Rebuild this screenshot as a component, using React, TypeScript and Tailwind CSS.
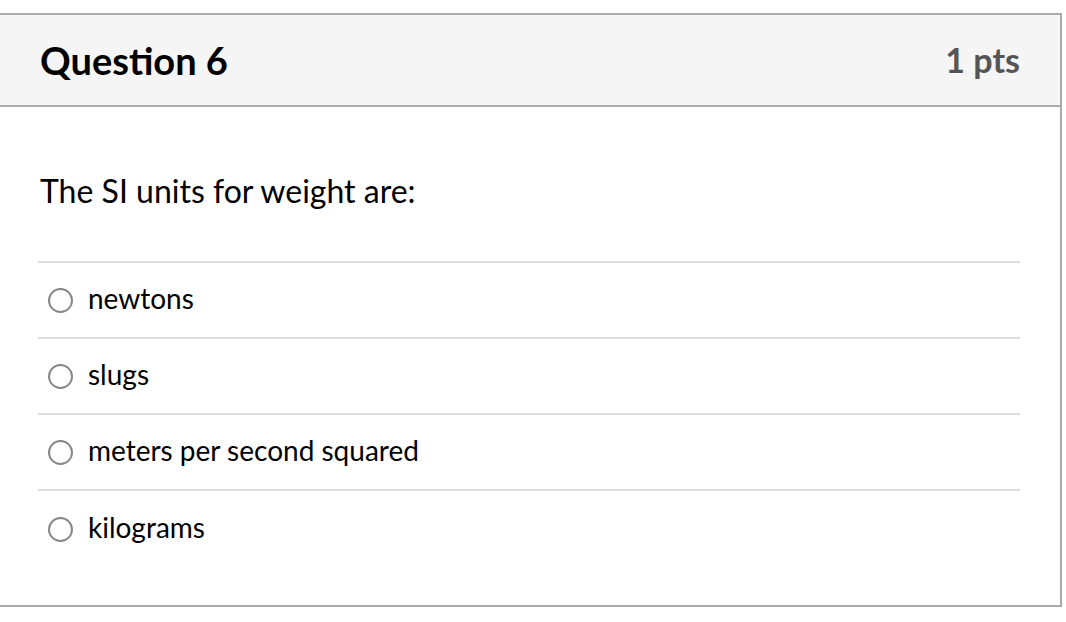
import { useState } from "react";

const answers = ["newtons", "slugs", "meters per second squared", "kilograms"];

export default function App() {
  const [picked, setPicked] = useState<string | null>(null);

  return (
    <div className="min-h-[622px] bg-white pt-[13px] font-['Lato','Liberation_Sans',sans-serif]">
      <div className="-ml-[2px] w-[1064px] border-2 border-[#aaaaaa] bg-white">
        <div className="flex h-[92px] items-center justify-between border-b-2 border-[#aaaaaa] bg-[#f5f5f5] pl-[40px] pr-[40px]">
          <h2 className="text-[38px] leading-[46px] font-bold text-black">Question 6</h2>
          <span className="text-[34px] leading-[46px] font-bold text-[#555555]">1 pts</span>
        </div>
        <div className="pl-[38px] pr-[40px] pb-[38px]">
          <p className="pl-[2px] pt-[64px] text-[32px] leading-[40px] text-black">The SI units for weight are:</p>
          <div className="mt-[50px] border-t-2 border-[#dddddd]">
            {answers.map((a, i) => (
              <label
                key={a}
                className={`flex h-[76px] cursor-pointer items-center gap-[15px] pl-[10px] ${
                  i < answers.length - 1 ? "border-b-2 border-[#dddddd]" : ""
                }`}
                onClick={() => setPicked(a)}
              >
                <span className="flex h-[25px] w-[25px] items-center justify-center rounded-full border-2 border-[#888888] bg-white">
                  {picked === a && <span className="h-[11px] w-[11px] rounded-full bg-[#555555]" />}
                </span>
                <span className="mb-[4px] text-[28px] text-black">{a}</span>
              </label>
            ))}
          </div>
        </div>
      </div>
    </div>
  );
}
